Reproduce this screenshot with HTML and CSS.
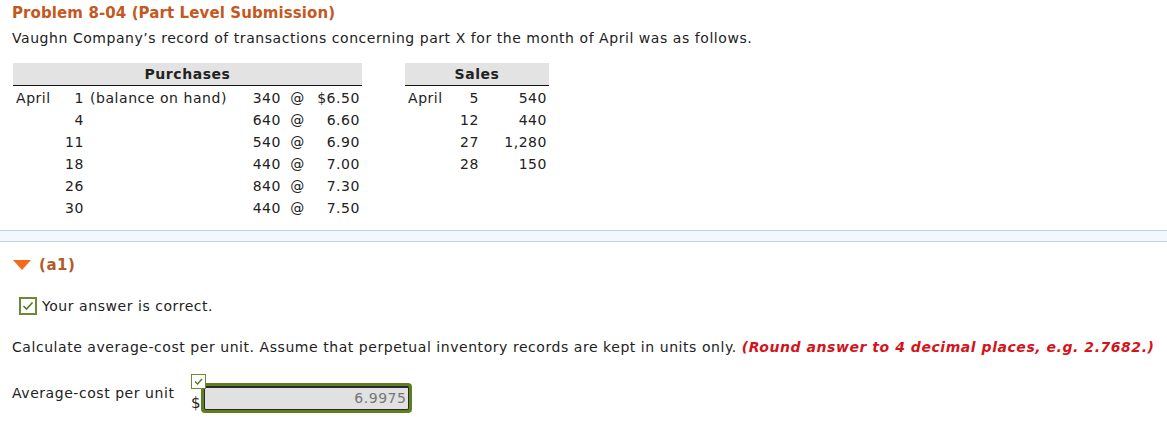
FILE: index.html
```html
<!DOCTYPE html>
<html>
<head>
<meta charset="utf-8">
<link rel="stylesheet" href="styles.css">
</head>
<body>
<div class="page">
  <h1 class="title">Problem 8-04 (Part Level Submission)</h1>
  <p class="intro">Vaughn Company’s record of transactions concerning part X for the month of April was as follows.</p>
  <div class="tables">
    <table class="tbl purchases">
      <colgroup>
        <col class="p-month"><col class="p-day"><col class="p-desc"><col class="p-qty"><col class="p-at"><col class="p-price">
      </colgroup>
      <thead><tr><th colspan="6">Purchases</th></tr></thead>
      <tbody>
        <tr><td class="month">April</td><td class="num">1</td><td class="desc">(balance on hand)</td><td class="num">340</td><td class="at">@</td><td class="num">$6.50</td></tr>
        <tr><td></td><td class="num">4</td><td></td><td class="num">640</td><td class="at">@</td><td class="num">6.60</td></tr>
        <tr><td></td><td class="num">11</td><td></td><td class="num">540</td><td class="at">@</td><td class="num">6.90</td></tr>
        <tr><td></td><td class="num">18</td><td></td><td class="num">440</td><td class="at">@</td><td class="num">7.00</td></tr>
        <tr><td></td><td class="num">26</td><td></td><td class="num">840</td><td class="at">@</td><td class="num">7.30</td></tr>
        <tr><td></td><td class="num">30</td><td></td><td class="num">440</td><td class="at">@</td><td class="num">7.50</td></tr>
      </tbody>
    </table>
    <table class="tbl sales">
      <colgroup><col class="s-month"><col class="s-day"><col class="s-amt"></colgroup>
      <thead><tr><th colspan="3">Sales</th></tr></thead>
      <tbody>
        <tr><td class="month">April</td><td class="num">5</td><td class="num">540</td></tr>
        <tr><td></td><td class="num">12</td><td class="num">440</td></tr>
        <tr><td></td><td class="num">27</td><td class="num">1,280</td></tr>
        <tr><td></td><td class="num">28</td><td class="num">150</td></tr>
      </tbody>
    </table>
  </div>
</div>
<div class="divider"></div>
<div class="page">
  <div class="part">
    <svg class="tri" width="18" height="10" viewBox="0 0 18 10"><polygon points="0,0 18,0 9,10" fill="#f26b1d"/></svg>
    <span class="part-label">(a1)</span>
  </div>
  <div class="status">
    <svg class="chk" width="18" height="18" viewBox="0 0 18 18"><rect x="1" y="1" width="16" height="16" fill="#fff" stroke="#6b8a35" stroke-width="2"/><polyline points="4.5,9 7.5,12 13.5,5.5" fill="none" stroke="#4f7d22" stroke-width="1.6"/></svg>
    <span>Your answer is correct.</span>
  </div>
  <p class="question">Calculate average-cost per unit. Assume that perpetual inventory records are kept in units only. <em class="hint">(Round answer to 4 decimal places, e.g. 2.7682.)</em></p>
  <div class="answer">
    <span class="answer-label">Average-cost per unit</span>
    <span class="field">
      <svg class="mini-chk" width="15" height="15" viewBox="0 0 15 15"><rect x="0.5" y="0.5" width="14" height="14" fill="#fff" stroke="#6b8a35" stroke-width="1"/><polyline points="4,7.5 6.5,10 11,5" fill="none" stroke="#4f7d22" stroke-width="1.4"/></svg>
      <span class="dollar">$</span>
      <span class="input"><span class="input-inner">6.9975</span></span>
    </span>
  </div>
</div>
</body>
</html>
```
FILE: styles.css
```css
body {
  margin: 0;
  font-family: "DejaVu Sans", Verdana, sans-serif;
  font-size: 14px;
  letter-spacing: 0.55px;
  color: #222;
  background: #fff;
}
.page {
  padding: 0 12px;
}
.title {
  margin: 0;
  padding-top: 3px;
  font-size: 15px;
  letter-spacing: 0.1px;
  line-height: 20px;
  font-weight: bold;
  color: #c4581f;
}
.intro {
  margin: 5px 0 0;
  line-height: 20px;
}
.tables {
  display: flex;
  align-items: flex-start;
  gap: 43px;
  margin-top: 15px;
  padding-left: 1px;
}
.tbl {
  border-collapse: collapse;
  table-layout: fixed;
}
.tbl th {
  background: #e3e3e3;
  border-bottom: 1px solid #111;
  height: 22px;
  padding: 0;
  font-weight: bold;
  text-align: center;
  line-height: 22px;
}
.tbl td {
  height: 22px;
  padding: 0;
  line-height: 22px;
  white-space: nowrap;
}
.tbl tbody tr:first-child td {
  padding-top: 1px;
}
.purchases { width: 349px; }
.p-month { width: 47px; }
.p-day { width: 26px; }
.p-desc { width: 154px; }
.p-qty { width: 43px; }
.p-at { width: 29px; }
.p-price { width: 50px; }
.sales { width: 144px; }
.s-month { width: 50px; }
.s-day { width: 26px; }
.s-amt { width: 68px; }
.month { padding-left: 3px !important; }
.num { text-align: right; padding-right: 2px !important; }
.desc { padding-left: 4px !important; }
.at { text-align: center; }
.divider {
  margin-top: 11px;
  height: 10px;
  background: #f1f8fe;
  border-top: 1px solid #c8ced8;
  border-bottom: 1px solid #c8ced8;
}
.part {
  display: flex;
  align-items: center;
  gap: 8px;
  margin-top: 13px;
  padding-left: 1px;
  line-height: 20px;
}
.part-label {
  font-weight: bold;
  font-size: 15px;
  color: #b35a2b;
}
.status {
  display: flex;
  align-items: center;
  gap: 5px;
  margin-top: 21px;
  padding-left: 7px;
  line-height: 20px;
}
.question {
  margin: 21px 0 0;
  line-height: 20px;
}
.hint {
  color: #d4131b;
  font-weight: bold;
  font-style: italic;
}
.answer {
  display: flex;
  align-items: flex-start;
  margin-top: 17px;
}
.answer-label {
  line-height: 20px;
  margin-top: 9px;
  width: 180px;
}
.field {
  position: relative;
  display: flex;
  align-items: flex-end;
  padding-top: 9px;
}
.mini-chk {
  position: absolute;
  left: -1px;
  top: 0;
  z-index: 2;
}
.dollar {
  line-height: 16px;
  margin-bottom: 2px;
  margin-left: -1px;
  font-size: 15px;
  letter-spacing: 0;
}
.input {
  display: block;
  width: 205px;
  height: 24px;
  border: 3px solid #5d7f20;
  border-radius: 4px;
  background: #5d7f20;
}
.input-inner {
  display: block;
  border: 1px solid #2a2a2a;
  border-top-width: 2px;
  height: 21px;
  border-radius: 2px;
  background: #e1e1e1;
  color: #777;
  text-align: right;
  line-height: 21px;
  padding-right: 1px;
  font-size: 14px;
}
```
